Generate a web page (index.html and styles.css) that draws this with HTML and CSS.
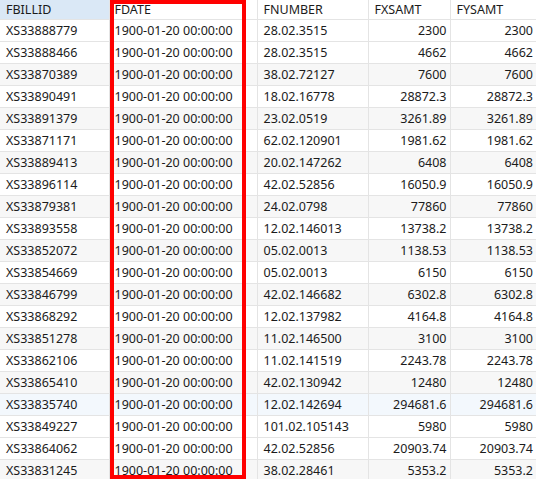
FILE: index.html
```html
<!DOCTYPE html>
<html>
<head>
<meta charset="utf-8">
<link rel="stylesheet" href="styles.css">
</head>
<body>
<div class="grid-wrap">
<table class="grid">
<colgroup>
<col class="c1"><col class="c2"><col class="c3"><col class="c4"><col class="c5">
</colgroup>
<thead>
<tr><th class="sel">FBILLID</th><th class="date">FDATE</th><th>FNUMBER</th><th>FXSAMT</th><th>FYSAMT</th></tr>
</thead>
<tbody>
<tr><td>XS33888779</td><td class="date">1900-01-20 00:00:00</td><td>28.02.3515</td><td class="num">2300</td><td class="num">2300</td></tr>
<tr><td>XS33888466</td><td class="date">1900-01-20 00:00:00</td><td>28.02.3515</td><td class="num">4662</td><td class="num">4662</td></tr>
<tr class="alt"><td>XS33870389</td><td class="date">1900-01-20 00:00:00</td><td>38.02.72127</td><td class="num">7600</td><td class="num">7600</td></tr>
<tr><td>XS33890491</td><td class="date">1900-01-20 00:00:00</td><td>18.02.16778</td><td class="num">28872.3</td><td class="num">28872.3</td></tr>
<tr class="alt"><td>XS33891379</td><td class="date">1900-01-20 00:00:00</td><td>23.02.0519</td><td class="num">3261.89</td><td class="num">3261.89</td></tr>
<tr><td>XS33871171</td><td class="date">1900-01-20 00:00:00</td><td>62.02.120901</td><td class="num">1981.62</td><td class="num">1981.62</td></tr>
<tr class="alt"><td>XS33889413</td><td class="date">1900-01-20 00:00:00</td><td>20.02.147262</td><td class="num">6408</td><td class="num">6408</td></tr>
<tr><td>XS33896114</td><td class="date">1900-01-20 00:00:00</td><td>42.02.52856</td><td class="num">16050.9</td><td class="num">16050.9</td></tr>
<tr class="alt"><td>XS33879381</td><td class="date">1900-01-20 00:00:00</td><td>24.02.0798</td><td class="num">77860</td><td class="num">77860</td></tr>
<tr><td>XS33893558</td><td class="date">1900-01-20 00:00:00</td><td>12.02.146013</td><td class="num">13738.2</td><td class="num">13738.2</td></tr>
<tr class="alt"><td>XS33852072</td><td class="date">1900-01-20 00:00:00</td><td>05.02.0013</td><td class="num">1138.53</td><td class="num">1138.53</td></tr>
<tr><td>XS33854669</td><td class="date">1900-01-20 00:00:00</td><td>05.02.0013</td><td class="num">6150</td><td class="num">6150</td></tr>
<tr class="alt"><td>XS33846799</td><td class="date">1900-01-20 00:00:00</td><td>42.02.146682</td><td class="num">6302.8</td><td class="num">6302.8</td></tr>
<tr><td>XS33868292</td><td class="date">1900-01-20 00:00:00</td><td>12.02.137982</td><td class="num">4164.8</td><td class="num">4164.8</td></tr>
<tr class="alt"><td>XS33851278</td><td class="date">1900-01-20 00:00:00</td><td>11.02.146500</td><td class="num">3100</td><td class="num">3100</td></tr>
<tr><td>XS33862106</td><td class="date">1900-01-20 00:00:00</td><td>11.02.141519</td><td class="num">2243.78</td><td class="num">2243.78</td></tr>
<tr class="alt"><td>XS33865410</td><td class="date">1900-01-20 00:00:00</td><td>42.02.130942</td><td class="num">12480</td><td class="num">12480</td></tr>
<tr class="blue"><td>XS33835740</td><td class="date">1900-01-20 00:00:00</td><td>12.02.142694</td><td class="num">294681.6</td><td class="num">294681.6</td></tr>
<tr><td>XS33849227</td><td class="date">1900-01-20 00:00:00</td><td>101.02.105143</td><td class="num">5980</td><td class="num">5980</td></tr>
<tr><td>XS33864062</td><td class="date">1900-01-20 00:00:00</td><td>42.02.52856</td><td class="num">20903.74</td><td class="num">20903.74</td></tr>
<tr class="alt"><td>XS33831245</td><td class="date">1900-01-20 00:00:00</td><td>38.02.28461</td><td class="num">5353.2</td><td class="num">5353.2</td></tr>
</tbody>
</table>
<div class="highlight"></div>
</div>
</body>
</html>
```

FILE: styles.css
```css
html, body {
  margin: 0;
  padding: 0;
  background: #ffffff;
  overflow: hidden;
}
.grid-wrap {
  position: relative;
  width: 536px;
  height: 479px;
  overflow: hidden;
}
.grid {
  border-collapse: collapse;
  table-layout: fixed;
  width: 536px;
  font-family: "Noto Sans", "Open Sans", sans-serif;
  font-size: 12.5px;
  color: #1b1b1b;
}
.c1 { width: 109px; }
.c2 { width: 148px; }
.c3 { width: 111px; }
.c4 { width: 82px; }
.c5 { width: 86px; }
.grid th, .grid td {
  border: 1px solid #e4e4e4;
  border-top: none;
  padding: 0 4px 0 6px;
  white-space: nowrap;
  overflow: hidden;
  text-align: left;
  font-weight: normal;
}
.grid th {
  height: 19px;
  line-height: 19px;
}
.grid td {
  height: 21px;
  line-height: 21px;
}
.grid tr > :first-child { border-left: none; }
.grid tr > :last-child { border-right: none; }
.grid th.sel { background: #dae8f6; }
.grid .date { padding-left: 5px; }
.grid td.num { text-align: right; padding-right: 3px; }
.grid tr.alt td { background: #f7f7f7; }
.grid tr.blue td { background: #f3f8fd; }
.highlight {
  position: absolute;
  left: 110px;
  top: 0;
  width: 128px;
  height: 471px;
  border: 4px solid #ff0000;
}
```
